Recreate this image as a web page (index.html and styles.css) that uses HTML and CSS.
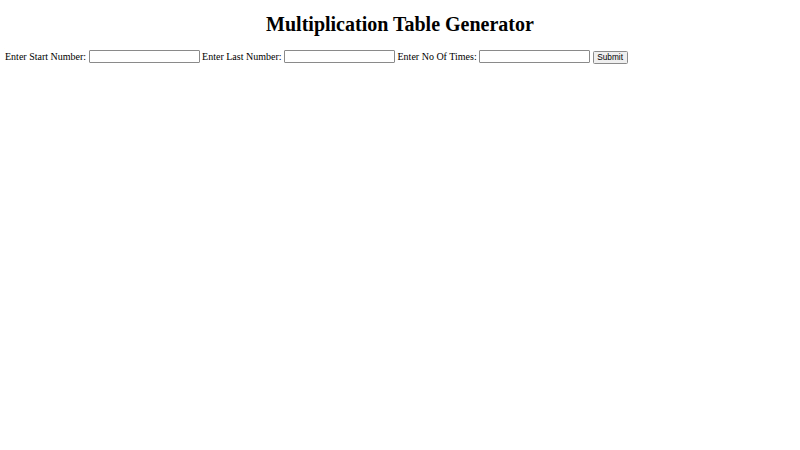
FILE: index.html
```html
<!DOCTYPE html>
<html>
<head>
<meta charset="utf-8">
<title>Multiplication Table Generator</title>
<link rel="stylesheet" href="styles.css">
</head>
<body>
<h1 class="title">Multiplication Table Generator</h1>
<form class="form">
<label class="label">Enter Start Number:</label> <input class="field" type="text">
<label class="label">Enter Last Number:</label> <input class="field" type="text">
<label class="label">Enter No Of Times:</label> <input class="field" type="text">
<button class="btn" type="button">Submit</button>
</form>
</body>
</html>
```
FILE: styles.css
```css
html, body {
  background: #fff;
}
body {
  margin: 5px;
  font-family: "Liberation Serif", "Times New Roman", serif;
  font-size: 10px;
  color: #000;
}
.title {
  font-size: 20px;
  font-weight: bold;
  text-align: center;
  margin: 8.4px 0 13.4px;
}
.form {
  margin: 0;
  line-height: 1.15;
}
.label {
  font-size: 10px;
}
.field {
  box-sizing: border-box;
  width: 111px;
  height: 13px;
  margin: 0;
  padding: 0 1px;
  border: 1px solid #8a8a8a;
  border-radius: 1px;
  font-family: "Liberation Sans", Arial, sans-serif;
  font-size: 8.3px;
  vertical-align: baseline;
  background: #fff;
}
.btn {
  box-sizing: border-box;
  height: 13px;
  margin: 0;
  padding: 0 3.5px;
  border: 1px solid #8a8a8a;
  border-radius: 1.5px;
  background: #efefef;
  font-family: "Liberation Sans", Arial, sans-serif;
  font-size: 8.3px;
  line-height: normal;
  color: #000;
  vertical-align: -1px;
}
```
